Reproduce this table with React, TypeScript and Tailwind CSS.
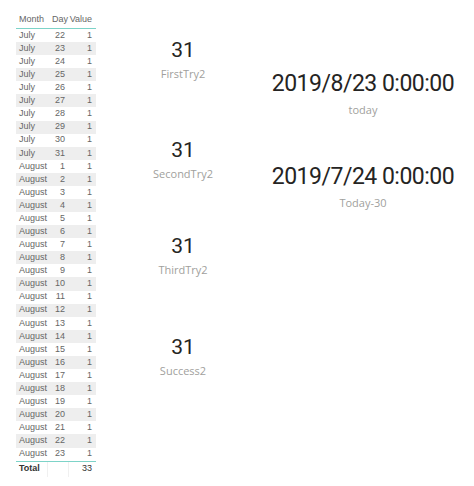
import React from "react"

const rows: { month: string; day: number }[] = [
  ...Array.from({ length: 10 }, (_, i) => ({ month: "July", day: 22 + i })),
  ...Array.from({ length: 23 }, (_, i) => ({ month: "August", day: 1 + i })),
]

function Card({ value, label, className }: { value: string; label: string; className: string }) {
  return (
    <div className={`flex flex-col items-center ${className}`}>
      <div className="text-[21px] leading-[24px] text-[#252423] font-['Roboto',sans-serif]">{value}</div>
      <div className="mt-[5px] text-[11px] leading-[14px] text-[#a19f9d] font-['Open_Sans',sans-serif]">{label}</div>
    </div>
  )
}

function DateCard({ value, label, className }: { value: string; label: string; className: string }) {
  return (
    <div className={`flex flex-col items-center ${className}`}>
      <div className="whitespace-nowrap text-[23px] leading-[28px] tracking-[-0.5px] text-[#252423] font-['Roboto',sans-serif]">
        {value}
      </div>
      <div className="mt-[5px] text-[11px] leading-[14px] text-[#a19f9d] font-['Open_Sans',sans-serif]">{label}</div>
    </div>
  )
}

export default function App() {
  return (
    <div className="w-[474px] h-[486px] bg-white flex overflow-hidden">
      {/* Table */}
      <div className="ml-4 mt-3 w-20 shrink-0 text-[9px] text-[#666666] font-['Liberation_Sans',sans-serif]">
        <div className="flex h-[17px] items-center border-b border-[#7dd3c8]">
          <div className="w-8 pl-[3px]">Month</div>
          <div className="w-[21px] pl-1">Day</div>
          <div className="flex-1 text-right pr-1">Value</div>
        </div>
        {rows.map((r, i) => (
          <div key={i} className={`flex h-[13.09px] items-center ${i % 2 === 1 ? "bg-[#eeeeee]" : "bg-white"}`}>
            <div className="w-8 pl-[3px]">{r.month}</div>
            <div className="w-[21px] text-right pr-1">{r.day}</div>
            <div className="flex-1 text-right pr-1">1</div>
          </div>
        ))}
        <div className="flex h-4 items-center border-t border-[#7dd3c8] text-[#333333]">
          <div className="w-8 pl-[3px] border-r border-[#f0f0f0] h-full flex items-center font-bold">Total</div>
          <div className="w-[21px] border-r border-[#f0f0f0] h-full"></div>
          <div className="flex-1 text-right pr-1">33</div>
        </div>
      </div>

      {/* KPI cards */}
      <div className="ml-[44px] w-[86px] shrink-0 flex flex-col">
        <Card value="31" label="FirstTry2" className="mt-[38px]" />
        <Card value="31" label="SecondTry2" className="mt-[57px]" />
        <Card value="31" label="ThirdTry2" className="mt-[53px]" />
        <Card value="31" label="Success2" className="mt-[58px]" />
      </div>

      {/* Date cards */}
      <div className="ml-[38px] w-[198px] shrink-0 flex flex-col">
        <DateCard value="2019/8/23 0:00:00" label="today" className="mt-[70px]" />
        <DateCard value="2019/7/24 0:00:00" label="Today-30" className="mt-[46px]" />
      </div>
    </div>
  )
}
